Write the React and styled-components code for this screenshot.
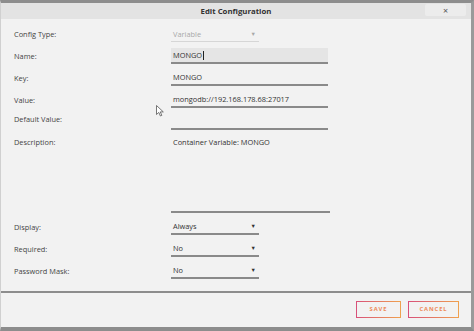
import React from "react";
import styled, { createGlobalStyle } from "styled-components";

const Global = createGlobalStyle`
  html, body { margin: 0; padding: 0; background: #f2f2f2; }
  body { font-family: "Open Sans", "Noto Sans", sans-serif; }
  * { box-sizing: border-box; }
`;

const Dialog = styled.div`
  position: relative;
  width: 474px;
  height: 331px;
  background: #f2f2f2;
  border-top: 3px solid #8d8d8d;
  border-right: 3px solid #9a9a9a;
  border-left: 1px solid #d0d0d0;
  border-bottom: 4px solid #8d8d8d;
  display: flex;
  flex-direction: column;
  overflow: hidden;
`;

const Header = styled.div`
  height: 16px;
  background: #e3e3e3;
  display: flex;
  align-items: center;
  justify-content: center;
  position: relative;
  flex-shrink: 0;
`;

const Title = styled.div`
  font-size: 7.8px;
  font-weight: 700;
  color: #333;
`;

const Close = styled.div`
  position: absolute;
  left: 424px;
  top: 1px;
  width: 41px;
  height: 12px;
  background: #ececec;
  border-radius: 2px;
  display: flex;
  align-items: center;
  justify-content: center;
  font-size: 9px;
  color: #555;
`;

const Body = styled.div`
  flex: 1;
  padding: 7px 0 0 13px;
  display: flex;
  flex-direction: column;
  gap: 6px;
`;

const Row = styled.div`
  display: grid;
  grid-template-columns: 157px auto;
  align-items: ${(p) => (p.$top ? "start" : "center")};
  margin-top: ${(p) => p.$mt || 0}px;
`;

const Label = styled.div`
  font-size: 7.4px;
  color: #444;
  padding-top: ${(p) => (p.$top ? "1px" : "0")};
`;

const Field = styled.div`
  width: ${(p) => p.$w}px;
  height: ${(p) => p.$h || 16}px;
  border-bottom: ${(p) => (p.$light ? "1px solid #d6d6d6" : "2px solid #8a8a8a")};
  background: ${(p) => (p.$focus ? "#e5e5e5" : "transparent")};
  display: flex;
  align-items: ${(p) => (p.$top ? "flex-start" : "center")};
  justify-content: space-between;
  padding: ${(p) => (p.$top ? "1px 2px 0 2px" : "0 3px 0 2px")};
  font-size: 7.4px;
  color: ${(p) => (p.$muted ? "#a8a8a8" : "#333")};
`;

const Caret = styled.span`
  display: inline-block;
  width: 1px;
  height: 9px;
  background: #222;
  vertical-align: middle;
  margin-left: 0.5px;
`;

const Arrow = styled.span`
  font-size: 5.5px;
  color: ${(p) => (p.$muted ? "#a8a8a8" : "#333")};
`;

const Footer = styled.div`
  height: 36px;
  border-top: 2px solid #8d8d8d;
  display: flex;
  justify-content: flex-end;
  align-items: center;
  gap: 7px;
  padding: 0 12px 2px 0;
  flex-shrink: 0;
`;

const Btn = styled.div`
  width: ${(p) => p.$w}px;
  height: 17px;
  border: 1.5px solid;
  border-image: linear-gradient(90deg, #d8507a, #f0a24e) 1;
  display: flex;
  align-items: center;
  justify-content: center;
  font-size: 5.8px;
  font-weight: 700;
  letter-spacing: 0.9px;
  color: #ee8a58;
`;

const Pointer = styled.svg`
  position: absolute;
  left: 155px;
  top: 102px;
`;

export default function App() {
  return (
    <>
      <Global />
      <Dialog>
        <Header>
          <Title>Edit Configuration</Title>
          <Close>×</Close>
        </Header>
        <Body>
          <Row>
            <Label>Config Type:</Label>
            <Field $w={88} $light $muted>
              <span>Variable</span>
              <Arrow $muted>▼</Arrow>
            </Field>
          </Row>
          <Row>
            <Label>Name:</Label>
            <Field $w={157} $focus>
              <span>MONGO<Caret /></span>
            </Field>
          </Row>
          <Row>
            <Label>Key:</Label>
            <Field $w={157}>
              <span>MONGO</span>
            </Field>
          </Row>
          <Row>
            <Label>Value:</Label>
            <Field $w={157}>
              <span>mongodb://192.168.178.68:27017</span>
            </Field>
          </Row>
          <Row $top>
            <Label>Default Value:</Label>
            <Field $w={157} />
          </Row>
          <Row $top>
            <Label $top>Description:</Label>
            <Field $w={159} $h={77} $top>
              <span>Container Variable: MONGO</span>
            </Field>
          </Row>
          <Row>
            <Label>Display:</Label>
            <Field $w={88}>
              <span>Always</span>
              <Arrow>▼</Arrow>
            </Field>
          </Row>
          <Row>
            <Label>Required:</Label>
            <Field $w={88}>
              <span>No</span>
              <Arrow>▼</Arrow>
            </Field>
          </Row>
          <Row>
            <Label>Password Mask:</Label>
            <Field $w={88}>
              <span>No</span>
              <Arrow>▼</Arrow>
            </Field>
          </Row>
        </Body>
        <Footer>
          <Btn $w={45}>SAVE</Btn>
          <Btn $w={51}>CANCEL</Btn>
        </Footer>
        <Pointer width="8" height="12" viewBox="0 0 8 12">
          <path d="M0.5 0.5 L0.5 9.5 L2.8 7.4 L4.4 11 L5.8 10.4 L4.3 6.9 L7.3 6.9 Z" fill="#fff" stroke="#555" strokeWidth="0.8" />
        </Pointer>
      </Dialog>
    </>
  );
}
